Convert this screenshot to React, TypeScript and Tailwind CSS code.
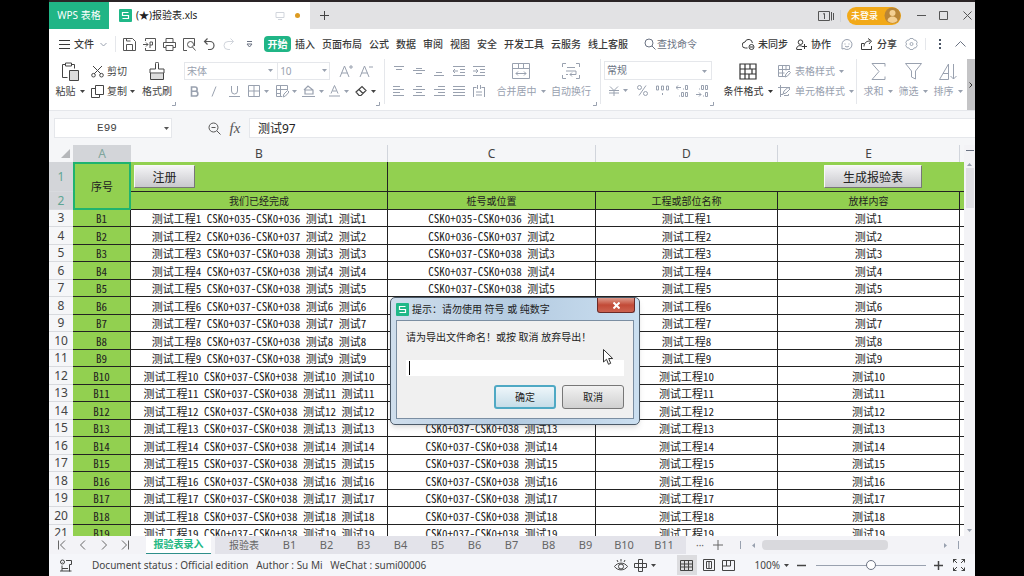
import { useState, type ReactNode } from "react";
import clsx from "clsx";

const rows = Array.from({ length: 19 }, (_, i) => {
  const n = i + 1;
  const stake = n === 1 ? "CSK0+035-CSK0+036" : n === 2 ? "CSK0+036-CSK0+037" : "CSK0+037-CSK0+038";
  return {
    no: `B${n}`,
    done: `测试工程${n} ${stake} 测试${n} 测试${n}`,
    stake: `${stake} 测试${n}`,
    part: `测试工程${n}`,
    sample: `测试${n}`,
  };
});

const menus = ["插入", "页面布局", "公式", "数据", "审阅", "视图", "安全", "开发工具", "云服务", "线上客服"];
const sheets = ["B1", "B2", "B3", "B4", "B5", "B6", "B7", "B8", "B9", "B10", "B11"];

interface IconProps {
  d: string;
  w?: number;
  h?: number;
  sw?: number;
  className?: string;
  children?: ReactNode;
}

function Icon({ d, w = 14, h = w, sw = 1, className, children }: IconProps) {
  return (
    <svg
      width={w}
      height={h}
      viewBox={`0 0 ${w} ${h}`}
      fill="none"
      stroke="currentColor"
      strokeWidth={sw}
      className={clsx("shrink-0", className)}
      aria-hidden="true"
    >
      {children}
      <path d={d} />
    </svg>
  );
}

function Caret({ className }: { className?: string }) {
  return (
    <svg width="5" height="3" viewBox="0 0 5 3" className={clsx("shrink-0", className)} aria-hidden="true">
      <path d="M0 0h5L2.5 3z" fill="currentColor" />
    </svg>
  );
}

function Corner() {
  return <Icon w={4} d="M3.5 0v3.5H0" className="self-end text-gray-400" />;
}

function Divider({ className }: { className?: string }) {
  return <span className={clsx("w-px shrink-0 bg-gray-200", className)} />;
}

function Tool({ label, className, children }: { label: string; className?: string; children: ReactNode }) {
  return (
    <button aria-label={label} className={clsx("flex h-5 w-5 shrink-0 items-center justify-center", className)}>
      {children}
    </button>
  );
}

function BigTool({ label, caret, className, children }: { label: string; caret?: boolean; className?: string; children: ReactNode }) {
  return (
    <button className={clsx("flex shrink-0 flex-col items-center whitespace-nowrap", className)}>
      <span className="flex h-6 items-center">{children}</span>
      <span className="flex h-4 items-center gap-1">
        {label}
        {caret && <Caret />}
      </span>
    </button>
  );
}

function Logo() {
  return (
    <svg width="13" height="13" viewBox="0 0 13 13" className="shrink-0" aria-hidden="true">
      <rect width="13" height="13" rx="1" fill="#20b888" />
      <path d="M9.5 3.5h-6v3h6v3h-6" fill="none" stroke="#fff" strokeWidth="1.2" />
    </svg>
  );
}

function TitleBar() {
  return (
    <header className="flex h-[29px] shrink-0 border-t-2 border-[#2a2426] bg-[#e2e2e4]">
      <button className="w-[60px] bg-[#20b586] text-[10px] text-white">WPS 表格</button>
      <div className="flex w-[201px] items-center bg-white pl-2.5 pr-2.5 text-[10px] text-[#222]">
        <Logo />
        <span className="ml-1">(★)报验表.xls</span>
        <Icon w={10} d="M1 1.5h8v5H1zM3 8.5h4" className="ml-auto text-gray-300" />
        <span className="ml-2.5 h-[5px] w-[5px] rounded-full bg-[#dd9b22]" />
      </div>
      <Tool label="新建" className="ml-1 self-center text-[#444]">
        <Icon w={11} d="M5.5 1v9M1 5.5h9" />
      </Tool>
      <div className="ml-auto flex items-center text-[#555]">
        <Icon w={16} h={12} d="M.5 1.5h11v9H.5zM5 4l1.500-.5V9M13.500 2v8.500M15.500 3v7" />
        <Divider className="mx-1.5 h-3 bg-gray-300" />
        <button className="flex h-[18px] w-[54px] items-center justify-between whitespace-nowrap rounded-full bg-[#f2a918] pl-1 text-[9px] font-medium text-white">
          未登录
          <svg width="17" height="17" viewBox="0 0 17 17" aria-hidden="true">
            <circle cx="8.500" cy="8.500" r="8" fill="#b98536" />
            <circle cx="8.500" cy="6" r="3" fill="#f4cf92" />
            <path d="M3.500 14c0-6 10-6 10 0a8 8 0 0 1-10 0z" fill="#f4cf92" />
          </svg>
        </button>
        <Tool label="最小化" className="ml-2.5"><Icon w={9} d="M0 4.500h9" /></Tool>
        <Tool label="最大化" className="ml-0.5"><Icon w={9} d="M.5.5h8v8h-8z" /></Tool>
        <Tool label="关闭" className="-mr-0.5 ml-1"><Icon w={9} d="M.5.5l8 8M8.500.5l-8 8" /></Tool>
      </div>
    </header>
  );
}

function MenuBar() {
  return (
    <nav className="flex h-[30px] shrink-0 items-center whitespace-nowrap bg-white pl-2.5 pr-[5px] text-[#3a3a3a]">
      <button className="flex items-center">
        <Icon w={11} h={9} d="M0 .5h11M0 4.500h11M0 8.500h11" />
        <span className="ml-1 font-medium">文件</span>
        <Icon w={7} h={5} d="M.5 1l3 3 3-3" className="ml-1.5 text-gray-400" />
      </button>
      <Divider className="ml-2 h-4" />
      <div className="flex w-[138px] justify-between pl-[3px] text-[#555]">
        <Tool label="保存"><Icon w={13} d="M.5.5h9l3 3v9H.5zM3.500 12.500v-6h6v6M3.500.5v2.500h4" /></Tool>
        <Tool label="输出为PDF"><Icon w={13} d="M2.500 3V.5h10v12h-10V10M0 6.500h5M3 4.500l2 2-2 2M7 10V4h2.500v3H7" /></Tool>
        <Tool label="打印"><Icon w={13} d="M3 4V.5h7V4M3 9.500H.5V4.500h12v5H10M3 7.500h7v5H3z" /></Tool>
        <Tool label="打印预览"><Icon w={13} d="M4 12.500H.5V.5h11V8M7.500 9.500a3 3 0 1 1 0-6 3 3 0 0 1 0 6zM9.500 9l3 3.500" /></Tool>
        <Tool label="撤销"><Icon w={12} d="M4.500.5l-3 3 3 3M1.500 3.500H7a3.800 3.800 0 0 1 0 8H5" sw={1.2} /></Tool>
        <Tool label="恢复" className="text-gray-300"><Icon w={12} d="M7.500.5l3 3-3 3M10.500 3.500H5a3.800 3.800 0 0 0 0 8h2" /></Tool>
        <Tool label="更多" className="text-gray-500"><Icon w={7} d="M1 .5h5M1 3h5L3.500 6z" /></Tool>
      </div>
      <button className="ml-2.5 h-4 w-[27px] rounded bg-[#20b586] font-bold text-white">开始</button>
      <div className="ml-1 flex gap-[7px] font-medium">
        {menus.map((m) => (
          <button key={m}>{m}</button>
        ))}
      </div>
      <label className="ml-4 flex items-center text-gray-500">
        <Icon w={12} d="M5 9a4 4 0 1 1 0-8 4 4 0 0 1 0 8zM8 8l3.500 3.500" />
        <input placeholder="查找命令" className="ml-px w-12 bg-transparent placeholder:text-gray-500" />
      </label>
      <div className="ml-auto flex items-center font-medium">
        <button className="flex items-center gap-[3px]">
          <Icon w={13} h={12} d="M5.500 10H3.500a3 3 0 0 1-.5-6 3.800 3.800 0 0 1 7.400 1M9.500 11.500a2.500 2.500 0 1 1 0-5 2.500 2.500 0 0 1 0 5zM8 9h3" />
          未同步
        </button>
        <button className="ml-2 flex items-center gap-1">
          <Icon w={11} d="M4.500 5.500a2.300 2.300 0 1 1 0-4.600 2.300 2.300 0 0 1 0 4.600zM.5 10.500c0-5 5-4 5.500-3M1 10.500h5M8.500 5v5M6 7.500h5" />
          协作
        </button>
        <Tool label="反馈" className="ml-1.5 text-gray-400">
          <Icon w={12} h={11} d="M6 .5a5 5 0 1 1-3 9L1 10V5.500a5 5 0 0 1 5-5zM4 4.500v1M8 4.500v1M4 7c1 1.200 3 1.200 4 0" />
        </Tool>
        <button className="ml-1 flex items-center gap-1">
          <Icon w={12} d="M3 5.500H.5v6h10V8M3 8.500c0-4 3-5.500 6-5.500M7 .5L10.500 3 8 6" />
          分享
        </button>
        <Tool label="设置" className="ml-1 text-gray-400">
          <Icon w={13} h={14} d="M5 1.500h3l1 1.500 2 .3 1.200 2.200-.8 1.500.8 1.500L11 10.700l-2 .3-1 1.500H5L4 11l-2-.3L.8 8.500 1.600 7 .8 5.500 2 3.300 4 3zM6.500 8.500a1.500 1.500 0 1 0 0-3 1.500 1.500 0 0 0 0 3z" sw={0.9} />
        </Tool>
        <Divider className="ml-1 h-3" />
        <Tool label="选项" className="ml-1 w-4 text-gray-600">
          <svg width="2" height="10" viewBox="0 0 2 10" fill="currentColor" aria-hidden="true">
            <path d="M0 0h2v2H0zM0 4h2v2H0zM0 8h2v2H0z" />
          </svg>
        </Tool>
        <Tool label="收起功能区"><Icon w={11} h={6} d="M.5 5.500l5-5 5 5" className="text-gray-500" /></Tool>
      </div>
    </nav>
  );
}

const aligns = [
  ["顶端对齐", "M1 1.500h10M3 4.500h6"],
  ["垂直居中", "M0 5.500h12M3 3.500h6M3 8.500h6"],
  ["底端对齐", "M1 10.500h10M3 7.500h6"],
  ["减少缩进", "M0 1.500h12M7 4.500h5M7 7.500h5M0 10.500h12M5 6H0M2 4L0 6l2 2"],
  ["增加缩进", "M0 1.500h12M7 4.500h5M7 7.500h5M0 10.500h12M0 6h5M3 4l2 2-2 2"],
  ["左对齐", "M0 1.500h7M0 4.500h11M0 7.500h7M0 10.500h11"],
  ["居中", "M3 1.500h6M0 4.500h12M3 7.500h6M0 10.500h12"],
  ["右对齐", "M5 1.500h7M1 4.500h11M5 7.500h7M1 10.500h11"],
  ["两端对齐", "M0 1.500h12M0 4.500h12M0 7.500h12M0 10.500h12"],
  ["分散对齐", "M.5 2v10M11.500 2v10M.5 2.500h3M8.500 2.500h3M4.500 0v4M7.500 0v4M3 7h6M3 10h6"],
];

function Ribbon() {
  return (
    <section className="flex h-[52px] shrink-0 overflow-hidden whitespace-nowrap border-b border-gray-200 bg-white pl-[7px] text-[#444]">
      <BigTool label="粘贴" caret className="w-7">
        <Icon w={18} h={19} d="M6.500 15.500h-5v-13h3M10.500 2.500h3v4M4.500 1h6v3h-6zM8.500 8.500h9v10h-9z">
          <path d="M9 9h8v9H9z" fill="#ddd" stroke="none" />
        </Icon>
      </BigTool>
      <div className="ml-[7px] flex w-[46px] flex-col pt-0.5">
        <button className="flex h-5 items-center gap-[3px]">
          <Icon w={13} d="M2 1l8 8M11 1L3 9M2.500 12a1.800 1.800 0 1 1 0-3.600 1.800 1.800 0 0 1 0 3.600zM10.500 12a1.800 1.800 0 1 1 0-3.600 1.800 1.800 0 0 1 0 3.600z" />
          剪切
        </button>
        <button className="flex h-5 items-center gap-[3px]">
          <Icon w={13} d="M4.500.5h8v9h-8zM4.500 3.500h-4v9h8v-3" />
          复制
          <Caret />
        </button>
      </div>
      <BigTool label="格式刷" className="ml-[5px] w-[30px]">
        <Icon w={16} h={18} d="M6.500 7V1.500a1.500 1.500 0 0 1 3 0V7h5.500v4H1V7zM1.500 11v6.500h13V11" >
          <path d="M2 12h12v5H2z" fill="#ddd" stroke="none" />
        </Icon>
      </BigTool>
      <div className="flex pb-1"><Corner /></div>

      <div className="ml-2 w-[192px] pt-0.5 text-gray-400">
        <div className="flex h-5 items-center">
          <div className="relative h-[18px] w-[98px] border border-gray-200">
            <select aria-label="字体" className="h-full w-full appearance-none pl-0.5">
              <option>宋体</option>
            </select>
            <Caret className="absolute right-1 top-1.5" />
          </div>
          <div className="relative h-[18px] w-[54px] border border-l-0 border-gray-200">
            <select aria-label="字号" className="h-full w-full appearance-none pl-0.5">
              <option>10</option>
            </select>
            <Caret className="absolute right-0.5 top-1.5" />
          </div>
          <Tool label="增大字号" className="ml-1.5"><Icon w={14} d="M1 13L5.500 2 10 13M2.500 9h6M10 3h4M12 1v4" /></Tool>
          <Tool label="减小字号"><Icon w={14} d="M1 13L5.500 2 10 13M2.500 9h6M10 3h4" /></Tool>
        </div>
        <div className="flex h-5 items-center">
          <Tool label="加粗"><Icon w={9} h={11} sw={1.6} d="M1.500 1h3.500a2 2 0 0 1 0 4.300H1.500zM1.500 5.300h4a2.300 2.300 0 0 1 0 4.700h-4z" /></Tool>
          <Tool label="倾斜"><Icon w={6} h={11} d="M5 .5L1 10.500" /></Tool>
          <Tool label="下划线"><Icon w={11} d="M2.500 0v5a3 3 0 0 0 6 0V0M0 10.500h11" /></Tool>
          <Tool label="边框" className="w-7 gap-1"><Icon w={12} d="M.5.5h11v11H.5zM6 .5v11M.5 6h11" /><Caret /></Tool>
          <Tool label="绘图边框" className="w-7 gap-[3px]"><Icon w={13} d="M6 11.500H.5V.5h11V5M4.500.5v11M.5 4.500h11M.5 8.500h4M7 12l1-3 3.500-3.500 1.500 1.500L9.500 11z" /><Caret /></Tool>
          <Tool label="填充颜色" className="w-[26px] gap-1"><Icon w={13} sw={1.200} d="M2 5l4-4 5 4v4H3V5h8M0 11.500h13" /><Caret /></Tool>
          <Tool label="字体颜色" className="w-[26px] gap-1"><Icon w={11} h={12} d="M2 8.500L5.500.5 9 8.500M3.500 6h4M0 11h11" /><Caret /></Tool>
          <Tool label="清除" className="w-[26px] gap-1 text-[#444]"><Icon w={12} d="M1 7l6-5.500 4 4L6 10.500H4zM4 4.500l4 4" sw={1.200} /><Caret /></Tool>
        </div>
      </div>
      <div className="flex pb-1"><Corner /></div>
      <Divider className="mb-1.5 ml-1" />

      <div className="ml-1 grid w-[100px] grid-cols-5 content-start pt-0.5 text-gray-400">
        {aligns.map(([label, d]) => (
          <Tool key={label} label={label}>
            <Icon w={12} d={d} />
          </Tool>
        ))}
      </div>
      <BigTool label="合并居中" caret className="ml-1.5 w-[52px] text-gray-400">
        <Icon w={18} h={16} d="M.5.5h17v15H.5zM.5 5.500h17M6.500.5v5M11.500.5v5M4 10.500h10M6 8.500l-2 2 2 2M12 8.500l2 2-2 2" />
      </BigTool>
      <BigTool label="自动换行" className="ml-0.5 w-[44px] text-gray-400">
        <Icon w={18} h={16} d="M4 .5H.5V4M14 .5h3.500V4M4 15.500H.5V12M14 15.500h3.500V12M5 4.500h8M4 8h10v3.500H8M10 9.500l-2 2 2 2M4 11.500h2" />
      </BigTool>
      <div className="flex pb-1"><Corner /></div>
      <Divider className="mb-1.5 ml-[3px]" />

      <div className="ml-[3px] w-[108px] pt-0.5 text-gray-400">
        <div className="relative h-[19px] border border-gray-200">
          <select aria-label="数字格式" className="h-full w-full appearance-none pl-0.5 text-gray-500">
            <option>常规</option>
          </select>
          <Caret className="absolute right-1 top-2" />
        </div>
        <div className="flex h-[21px] items-center">
          <Tool label="货币" className="w-7 gap-1"><Icon w={10} d="M1 .5l4 4 4-4M0 4.500h10M0 7h10M5 4.500V10" /><Caret /></Tool>
          <Tool label="百分比"><Icon w={11} d="M9 .5L2 10.500M2.500 4.500a2 2 0 1 1 0-4 2 2 0 0 1 0 4zM8.500 10.500a2 2 0 1 1 0-4 2 2 0 0 1 0 4z" /></Tool>
          <Tool label="千位分隔"><Icon w={13} h={11} d="M.5 1h2v4h-2zM5.500 1h2v4h-2zM10.500 1h2v4h-2zM6.500 8v2" /></Tool>
          <Tool label="增加小数位"><Icon w={12} d="M0 2.500h5M2 .5l-2 2 2 2M9.500.5h2v4h-2zM5.500 7.500h2v4h-2zM9.500 7.500h2v4h-2zM3 11h1M7 4h1" /></Tool>
          <Tool label="减少小数位"><Icon w={12} d="M5.500.5h2v4h-2zM9.500.5h2v4h-2zM9.500 7.500h2v4h-2zM0 9.500h5M3 7.500l2 2-2 2M3 4h1M7 11h1" /></Tool>
        </div>
      </div>
      <div className="-ml-0.5 flex pb-1"><Corner /></div>
      <BigTool label="条件格式" caret className="ml-2 w-[52px] text-[#333]">
        <Icon w={18} h={17} sw={1.200} d="M1 1h16v15H1zM1 6h16M1 11h16M6 1v15M11 1v5M13 6v5M10 11v5" />
      </BigTool>
      <div className="ml-1 flex w-[76px] flex-col pt-0.5 text-gray-400">
        <button className="flex h-5 items-center gap-1">
          <Icon w={13} d="M7 11.500H.5V.5h11V5M4.500.5v11M8 .5v5M.5 4.500h11M.5 8h6M7 12l1-3 3-3 1.500 1.500-3 3.500z" />
          表格样式
          <Caret />
        </button>
        <button className="flex h-5 items-center gap-1">
          <Icon w={13} d="M2.500 0v12M0 2.500h12M6 10.500h4.500V9M2.500 9.500H5M5 9l1-3 4-3.500L12 4 8 8z" />
          单元格样式
          <Caret />
        </button>
      </div>
      <Divider className="mb-1.5 ml-0.5" />
      <div className="ml-[5px] flex gap-[3px] text-gray-400">
        <BigTool label="求和" caret className="w-8">
          <Icon w={15} h={17} d="M14 3.500V.5H1l7 8-7 8h13v-3" />
        </BigTool>
        <BigTool label="筛选" caret className="w-8">
          <Icon w={17} h={17} d="M.5.5h16l-6 7.500v8l-4-2V8z" />
        </BigTool>
        <BigTool label="排序" caret className="w-8">
          <Icon w={18} h={17} d="M.5 16.500L9.500 1v15.500zM4 10.500h5.500M14.500 1v15M11.500 13l3 3 3-3" />
        </BigTool>
      </div>
      <button aria-label="向右滚动" className="ml-auto flex w-2 items-center justify-center bg-[#c4c4c6] text-[#333]">
        <Icon w={4} h={6} d="M.5.5l2.500 2.500L.5 5.500" />
      </button>
    </section>
  );
}

function FormulaBar() {
  return (
    <div className="flex h-[34px] shrink-0 items-center bg-[#f5f6f8] pl-[5px] text-[#555]">
      <div className="relative h-5 w-[118px] border border-gray-200 bg-white">
        <input
          aria-label="名称框"
          defaultValue="E99"
          className="h-full w-full pr-3 text-center font-['Liberation_Mono',monospace] text-[11px] text-[#444]"
        />
        <Caret className="absolute right-0.5 top-2" />
      </div>
      <Tool label="浏览公式" className="ml-8">
        <Icon w={13} d="M5.500 10a4.500 4.500 0 1 1 0-9 4.500 4.500 0 0 1 0 9zM3.500 5.500h4M9 9l3.500 3.500" />
      </Tool>
      <button className="ml-px w-5 font-['Liberation_Serif',serif] text-[15px] italic">fx</button>
      <input
        aria-label="编辑栏"
        defaultValue="测试97"
        className="ml-1 h-5 min-w-0 flex-1 border border-r-0 border-gray-200 bg-white pl-2 text-[12px] text-[#222]"
      />
    </div>
  );
}

const cell = "overflow-hidden whitespace-nowrap border-b border-r border-[#222] p-0 text-center";
const song = "font-['Noto_Sans_Mono_CJK_SC','Noto_Sans_CJK_SC',monospace]";
const rowHead = "border-b border-[#d8dade] p-0 font-['Noto_Sans',sans-serif] text-[12px] font-normal";
const gray3d =
  "rounded-[1px] border border-[#f8f8f8] border-b-[#777] border-r-[#777] bg-linear-to-b from-[#f4f4f6] to-[#c9c9cd] text-[12px] leading-none text-[#222]";

function Grid() {
  return (
    <div className="flex min-h-0 flex-1 overflow-hidden">
      <div className="min-w-0 flex-1 overflow-hidden">
        <table className="w-full table-fixed border-separate border-spacing-0 bg-white text-[11px] leading-[14px] text-[#222]">
          <colgroup>
            <col className="w-6" />
            <col className="w-[58px]" />
            <col className="w-[257px]" />
            <col className="w-[208px]" />
            <col className="w-[182px]" />
            <col className="w-[182px]" />
            <col />
          </colgroup>
          <thead>
            <tr className="h-[17px] bg-[#f5f6f8] text-[12px] text-[#444]">
              <th className="p-0">
                <svg width="9" height="9" viewBox="0 0 9 9" className="ml-auto mr-[3px]" aria-hidden="true">
                  <path d="M9 0v9H0z" fill="#b5b7ba" />
                </svg>
              </th>
              <th className="bg-[#d3d5d9] p-0 font-normal text-[#7fa59c]">A</th>
              {["B", "C", "D", "E"].map((c) => (
                <th key={c} className="border-r border-gray-300 p-0 font-normal">
                  {c}
                </th>
              ))}
              <th className="p-0" />
            </tr>
          </thead>
          <tbody className={song}>
            <tr className="h-[30px] bg-[#92d050]">
              <th className={clsx(rowHead, "bg-[#d3d5d9] text-[#5fa594]")}>1</th>
              <td rowSpan={2} className="border-2 border-[#1fb36f] p-0 text-center">
                序号
              </td>
              <td className={cell}>
                <button className={clsx(gray3d, "ml-[3px] block h-[23px] w-[61px]")}>注册</button>
              </td>
              <td colSpan={4} className={clsx(cell, "border-r-0")}>
                <button className={clsx(gray3d, "ml-auto mr-[42px] block h-[23px] w-[98px]")}>生成报验表</button>
              </td>
            </tr>
            <tr className="h-[18px] bg-[#92d050]">
              <th className={clsx(rowHead, "bg-[#d3d5d9] text-[#5fa594]")}>2</th>
              {["我们已经完成", "桩号或位置", "工程或部位名称", "放样内容"].map((t) => (
                <td key={t} className={clsx(cell, "text-[10px]")}>
                  {t}
                </td>
              ))}
              <td className={clsx(cell, "border-r-0")} />
            </tr>
            {rows.map((r, i) => (
              <tr key={r.no} className="odd:h-[17px] even:h-[18px]">
                <th className={clsx(rowHead, "bg-[#f5f6f8] text-[#444]")}>{i + 3}</th>
                <td className={clsx(cell, "bg-[#92d050]")}>{r.no}</td>
                <td className={cell}>{r.done}</td>
                <td className={cell}>{r.stake}</td>
                <td className={cell}>{r.part}</td>
                <td className={cell}>{r.sample}</td>
                <td className={clsx(cell, "border-r-0")} />
              </tr>
            ))}
          </tbody>
        </table>
      </div>
      <div className="flex w-[11px] shrink-0 flex-col items-center bg-[#f3f3f6] pb-1 pt-[5px] text-gray-400">
        <span className="h-px w-2 bg-gray-500" />
        <Caret className="mt-3 rotate-180" />
        <span className="mt-0.5 h-10 w-2 bg-[#dfdfe4]" />
        <Caret className="mt-auto" />
      </div>
    </div>
  );
}

function SheetTabs() {
  return (
    <div className="flex h-[18px] shrink-0 items-center overflow-hidden whitespace-nowrap bg-[#f3f3f7] pl-[3px] text-[#666]">
      <div className="flex w-[94px] gap-px">
        <Tool label="第一张"><Icon w={8} h={10} d="M.5.5v9M7 .5L2.500 5 7 9.500" /></Tool>
        <Tool label="上一张"><Icon w={6} h={10} d="M5 .5L.5 5 5 9.500" /></Tool>
        <Tool label="下一张"><Icon w={6} h={10} d="M1 .5L5.500 5 1 9.500" /></Tool>
        <Tool label="最后一张"><Icon w={8} h={10} d="M7.500.5v9M1 .5L5.500 5 1 9.500" /></Tool>
      </div>
      <button className="h-full w-[65px] border-b border-[#2f8f8a] bg-white font-bold text-[#25b883]">报验表录入</button>
      <div className="ml-1 flex h-full items-center bg-[#e3e3ea] px-0.5">
        <button className="px-3">报验表</button>
        {sheets.map((s) => (
          <button key={s} className={clsx("text-center text-[11px]", s.length > 2 ? "w-10" : "w-[37px]")}>
            {s}
          </button>
        ))}
      </div>
      <button aria-label="更多工作表" className="ml-2 w-3">···</button>
      <Tool label="新建工作表" className="ml-0.5"><Icon w={10} d="M5 0v10M0 5h10" /></Tool>
      <div className="ml-3 mr-4 flex flex-1 items-center text-gray-400">
        <Divider className="h-2 bg-gray-400" />
        <Caret className="ml-2.5 rotate-90" />
        <div className="mx-1.5 h-2.5 flex-1">
          <div className="h-full w-[72%] rounded-sm bg-[#d9d9dd]" />
        </div>
        <Caret className="-rotate-90" />
        <Divider className="ml-2.5 h-2 bg-gray-400" />
      </div>
    </div>
  );
}

function StatusBar() {
  const [zoom, setZoom] = useState(100);
  return (
    <footer className="flex h-[22px] shrink-0 items-center whitespace-nowrap bg-[#f5f6fa] pl-2.5 pr-1.5 text-[#444]">
      <Icon w={14} h={13} d="M3.500 5a2 2 0 1 1 0-4 2 2 0 0 1 0 4zM3.500 3v.5M7 1.500h5.500v4h-2v7M3 6.500v3h6M1 12h11.500M3 9.500V12" />
      <p className="ml-[19px] whitespace-pre text-[10px]">
        Document status : Official edition   Author : Su Mi   WeChat : sumi00006
      </p>
      <div className="ml-auto flex items-center">
        <Tool label="护眼模式">
          <Icon w={14} h={13} d="M.5 7.500c3-4.500 10-4.500 13 0-3 4.500-10 4.500-13 0zM7 10a2.500 2.500 0 1 0 0-5 2.500 2.500 0 0 0 0 5zM7 0v2.500M3 1l1 2M11 1l-1 2" />
        </Tool>
        <Tool label="阅读模式" className="w-7 gap-1">
          <Icon w={13} d="M4.500.5h4v12h-4zM.5 4.500h12v4H.5z" />
          <Caret />
        </Tool>
        <Tool label="普通视图" className="ml-[18px] w-4 bg-[#dcdcdf]">
          <Icon w={13} h={11} d="M.5.5h12v10H.5zM.5 4h12M.5 7h12M4.500.5v10M8.500.5v10" />
        </Tool>
        <Tool label="页面布局" className="ml-0.5"><Icon w={12} d="M.5.5h11v11H.5zM3.500 2.500h5v7h-5zM6 2.500v7" /></Tool>
        <Tool label="分页预览"><Icon w={13} h={11} d="M.5.5h12v10H.5zM4.500.5V6h4V.5M.5 6h4" /></Tool>
        <button className="ml-4 flex items-center gap-1 text-[10px]">
          100%
          <Caret />
        </button>
        <button aria-label="缩小" className="ml-2" onClick={() => setZoom(Math.max(10, zoom - 10))}>
          <Icon w={9} sw={1.500} d="M0 4.500h9" />
        </button>
        <label className="relative ml-2.5 flex w-[110px] items-center">
          <span className="absolute inset-x-0 h-px bg-gray-400" />
          <input
            type="range"
            aria-label="显示比例"
            min={10}
            max={190}
            value={zoom}
            onChange={(e) => setZoom(Number(e.target.value))}
            className="relative h-3 w-full appearance-none bg-transparent [&::-webkit-slider-thumb]:h-2.5 [&::-webkit-slider-thumb]:w-2.5 [&::-webkit-slider-thumb]:appearance-none [&::-webkit-slider-thumb]:rounded-full [&::-webkit-slider-thumb]:border [&::-webkit-slider-thumb]:border-gray-500 [&::-webkit-slider-thumb]:bg-white"
          />
        </label>
        <button aria-label="放大" className="ml-2" onClick={() => setZoom(Math.min(190, zoom + 10))}>
          <Icon w={9} sw={1.500} d="M4.500 0v9M0 4.500h9" />
        </button>
        <Tool label="全屏" className="ml-1.5">
          <Icon w={12} d="M0 .5h3.500M.5 0v3.500M1 1l3 3M12 .5H8.500M11.500 0v3.500M11 1L8 4M0 11.500h3.500M.5 12V8.500M1 11l3-3M12 11.500H8.500M11.500 12V8.500M11 11L8 8" />
        </Tool>
      </div>
    </footer>
  );
}

function NameDialog() {
  return (
    <div
      role="dialog"
      aria-labelledby="dialog-title"
      className="absolute left-[390px] top-[297px] w-[250px] rounded-[5px] border border-[#4c5a68] bg-linear-to-r from-[#cfdeec] via-[#b4cbe1] to-[#cbdff0] px-[5px] pb-[5px] text-[10px] text-[#222] shadow-md"
    >
      <div className="flex h-[22px] items-center">
        <Logo />
        <h2 id="dialog-title" className="ml-[3px]">提示：请勿使用 符号 或 纯数字</h2>
        <button
          aria-label="关闭"
          className="-mr-px ml-auto flex h-[15px] w-[38px] items-center justify-center self-start rounded-b-[3px] border border-t-0 border-[#6b2b28] bg-linear-to-b from-[#dd9a8c] via-[#c24a37] to-[#cc6250] text-white"
        >
          <Icon w={7} sw={2} d="M.5.5l6 6M6.500.5l-6 6" />
        </button>
      </div>
      <form className="border border-[#7b8ea2] bg-[#f0f0f0] px-[9px] pb-[9px] pt-2" onSubmit={(e) => e.preventDefault()}>
        <label htmlFor="file-name" className="block h-4 whitespace-nowrap leading-4">
          请为导出文件命名！或按 取消 放弃导出！
        </label>
        <div className="relative mt-[15px]">
          <input id="file-name" className="block h-4 w-full bg-white pl-1 caret-transparent outline-none" />
          <span className="absolute left-[3px] top-px h-3.5 w-px bg-black" />
        </div>
        <div className="mt-[9px] flex justify-end gap-1.5">
          <button className="h-6 w-[62px] rounded-[3px] border-2 border-[#4fa9c4] bg-linear-to-b from-[#eef6fa] to-[#c6dde8]">确定</button>
          <button className="h-6 w-[62px] rounded-[3px] border border-[#777] bg-linear-to-b from-[#f2f2f2] to-[#d0d0d0]">取消</button>
        </div>
      </form>
      <svg width="11" height="17" viewBox="0 0 11 17" className="absolute left-[212px] top-[51px]" aria-hidden="true">
        <path d="M.5.5v12.500l3-2.700 2 5 2.200-1-2-4.800h4z" fill="#fff" stroke="#333" />
      </svg>
    </div>
  );
}

export default function App() {
  return (
    <main className="relative h-screen overflow-hidden bg-black px-[49px] font-['Noto_Sans','Noto_Sans_CJK_SC',sans-serif] text-[10px]">
      <div className="flex h-full flex-col bg-white">
        <TitleBar />
        <MenuBar />
        <Ribbon />
        <FormulaBar />
        <Grid />
        <SheetTabs />
        <StatusBar />
      </div>
      <NameDialog />
    </main>
  );
}
